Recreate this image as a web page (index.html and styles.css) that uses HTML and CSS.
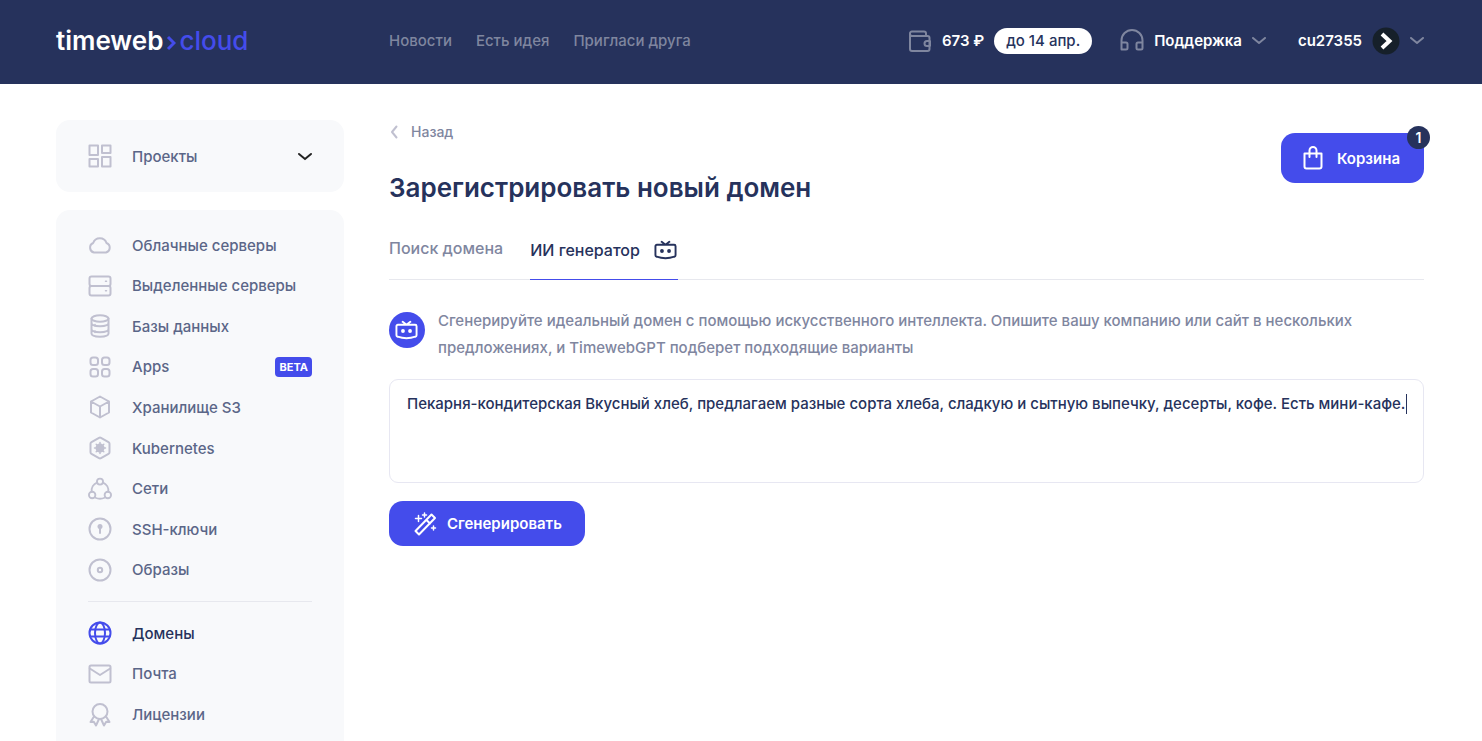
FILE: index.html
```html
<!DOCTYPE html>
<html lang="ru">
<head>
<meta charset="utf-8">
<meta name="viewport" content="width=device-width, initial-scale=1">
<title>Зарегистрировать новый домен</title>
<link rel="stylesheet" href="styles.css">
</head>
<body>
<header class="topbar">
  <a class="logo" href="#"><span class="logo-main">timeweb</span><svg class="logo-arrow" viewBox="0 0 10 16" width="10" height="16"><path d="M2 2l6 6-6 6"/></svg><span class="logo-accent">cloud</span></a>
  <nav class="topnav">
    <a href="#">Новости</a>
    <a href="#">Есть идея</a>
    <a href="#">Пригласи друга</a>
  </nav>
  <div class="account">
    <a class="balance" href="#">
      <svg class="icon" viewBox="0 0 24 24" width="24" height="24"><path d="M18 7V4.500a2 2 0 0 0-2-2H4a2 2 0 0 0-2 2.250A2.250 2.250 0 0 0 4 7h15.500a2 2 0 0 1 2 2v11a2 2 0 0 1-2 2H4a2 2 0 0 1-2-2V4.500M22 12h-3a2.500 2.500 0 0 0 0 5h3z"/></svg>
      <span>673 ₽</span>
      <span class="due">до 14 апр.</span>
    </a>
    <button class="menu support" type="button">
      <svg class="icon" viewBox="0 0 24 24" width="24" height="24"><path d="M1.500 20V11.500a10.500 10.500 0 0 1 21 0V19a1.500 1.500 0 0 1-1.500 1.500h-3A1.500 1.500 0 0 1 16.500 19v-4a1.500 1.500 0 0 1 1.500-1.500h4.500M1.500 13.500H6A1.500 1.500 0 0 1 7.500 15v4A1.500 1.500 0 0 1 6 20.500H1.500"/></svg>
      <span>Поддержка</span>
      <svg class="icon" viewBox="0 0 14 8" width="14" height="8"><path d="M1 1l6 5 6-5"/></svg>
    </button>
    <button class="menu" type="button">
      <span>cu27355</span>
      <svg class="avatar" viewBox="0 0 28 28" width="28" height="28"><circle cx="14" cy="14" r="13.500"/><path d="M10 7l7.500 7-7.500 7"/></svg>
      <svg class="icon" viewBox="0 0 14 8" width="14" height="8"><path d="M1 1l6 5 6-5"/></svg>
    </button>
  </div>
</header>

<div class="page">
  <aside class="sidebar">
    <button class="projects" type="button">
      <svg class="icon" viewBox="0 0 24 24" width="24" height="24"><path d="M1.500 1.500h8.500v9.500h-8.500zM14 1.500h8.500v7.500h-8.500zM1.500 15h8.500v7.500h-8.500zM14 13h8.500v9.500h-8.500z"/></svg>
      <span>Проекты</span>
      <svg class="chevron" viewBox="0 0 16 10" width="16" height="10"><path d="M2 3l6 5 6-5"/></svg>
    </button>
    <nav class="menu-card">
      <div class="group group-main">
        <a href="#"><svg class="icon" viewBox="0 0 24 24" width="24" height="24"><path d="M6 19.500a5 5 0 0 1-.8-9.500 7 7 0 0 1 13.300 0A5 5 0 0 1 18 19.500z"/></svg><span>Облачные серверы</span></a>
        <a href="#"><svg class="icon" viewBox="0 0 24 24" width="24" height="24"><rect x="1.500" y="2.500" width="21" height="9.500" rx="2"/><rect x="1.500" y="12" width="21" height="9.500" rx="2"/><path class="thin" d="M17.500 7.200h1M17.500 16.700h1"/></svg><span>Выделенные серверы</span></a>
        <a href="#"><svg class="icon" viewBox="0 0 24 24" width="24" height="24"><ellipse cx="12" cy="4.500" rx="8.500" ry="3.200"/><path d="M3.500 4.500v15c0 4.200 17 4.200 17 0v-15M3.500 9c0 4.200 17 4.200 17 0M3.500 15c0 4.200 17 4.200 17 0"/><path class="thin" d="M7 10.500v1.400M7 17v1.400"/></svg><span>Базы данных</span></a>
        <a href="#"><svg class="icon" viewBox="0 0 24 24" width="24" height="24"><rect x="2.500" y="2.500" width="7.500" height="7.500" rx="2.500"/><rect x="14" y="2.500" width="7.500" height="7.500" rx="2.500"/><rect x="2.500" y="14" width="7.500" height="7.500" rx="2.500"/><rect x="14" y="14" width="7.500" height="7.500" rx="2.500"/></svg><span>Apps</span><span class="tag">BETA</span></a>
        <a href="#"><svg class="icon" viewBox="0 0 24 24" width="24" height="24"><path d="M12 1.500l9 5v11l-9 5-9-5v-11zM3 6.500l9 5 9-5M12 11.500v11"/></svg><span>Хранилище S3</span></a>
        <a href="#"><svg class="icon" viewBox="0 0 24 24" width="24" height="24"><path d="M11 1.800a2 2 0 0 1 2 0l7.500 4.300a2 2 0 0 1 1 1.700v8.400a2 2 0 0 1-1 1.700L13 22.200a2 2 0 0 1-2 0l-7.500-4.300a2 2 0 0 1-1-1.700V7.800a2 2 0 0 1 1-1.700z"/><circle class="dot" cx="12" cy="12" r="4.500"/><path class="thin" d="M12 6.500v11M6.500 12h11M8.200 8.200l7.600 7.600M15.800 8.200l-7.600 7.600"/></svg><span>Kubernetes</span></a>
        <a href="#"><svg class="icon" viewBox="0 0 26 24" width="26" height="24"><circle cx="13" cy="4" r="3.300"/><circle cx="4.500" cy="18.500" r="3.500"/><circle cx="21.500" cy="18.500" r="3.500"/><path d="M9.700 5A9.500 9.500 0 0 0 4 15M16.300 5A9.500 9.500 0 0 1 22 15M8 21.500c3 1.300 7 1.300 10 0"/></svg><span>Сети</span></a>
        <a href="#"><svg class="icon" viewBox="0 0 24 24" width="24" height="24"><circle cx="12" cy="12" r="10.500"/><circle class="dot" cx="12" cy="9.500" r="2.500"/><path d="M12 10v6"/></svg><span>SSH-ключи</span></a>
        <a href="#"><svg class="icon" viewBox="0 0 24 24" width="24" height="24"><circle cx="12" cy="12" r="10.500"/><circle cx="12" cy="12" r="2.200"/></svg><span>Образы</span></a>
      </div>
      <div class="group group-more">
        <a class="current" href="#"><svg class="icon" viewBox="0 0 24 24" width="24" height="24"><circle cx="12" cy="12" r="10.500"/><ellipse cx="12" cy="12" rx="5" ry="10.500"/><path d="M2.500 8.500h19M2.500 15.500h19"/></svg><span>Домены</span></a>
        <a href="#"><svg class="icon" viewBox="0 0 24 24" width="24" height="24"><rect x="1.500" y="3.500" width="21" height="17" rx="1.500"/><path d="M1.800 6.500L12 13l10.200-6.500"/></svg><span>Почта</span></a>
        <a href="#"><svg class="icon" viewBox="0 0 24 24" width="24" height="24"><circle cx="12" cy="8.500" r="7.500"/><path d="M6 13.500L2.500 19l3.300-.3L8 22.500l3-6.500M18 13.500l3.500 5.500-3.300-.3L16 22.500 13 16"/></svg><span>Лицензии</span></a>
      </div>
    </nav>
  </aside>

  <main class="content">
    <div class="headline">
      <div>
        <a class="back" href="#"><svg class="icon" viewBox="0 0 10 14" width="10" height="14"><path d="M7.500 1.500L3 7l4.500 5.500"/></svg><span>Назад</span></a>
        <h1>Зарегистрировать новый домен</h1>
      </div>
      <button class="btn cart" type="button">
        <svg class="icon" viewBox="0 0 20 24" width="20" height="24"><path d="M1.500 7.500h17v13a2 2 0 0 1-2 2h-13a2 2 0 0 1-2-2zM6.500 11V4.500a3.500 3.500 0 0 1 7 0V11"/></svg>
        <span>Корзина</span>
        <span class="count">1</span>
      </button>
    </div>

    <div class="tabs" role="tablist">
      <button class="tab" type="button" role="tab" aria-selected="false">Поиск домена</button>
      <button class="tab" type="button" role="tab" aria-selected="true"><span>ИИ генератор</span><svg class="icon bot-face" viewBox="0 0 24 20" width="24" height="20"><path d="M3 4.500h18a1.500 1.500 0 0 1 1.500 1.500v9.500a1.500 1.500 0 0 1-1.200 1.500Q12 20.200 2.700 17a1.500 1.500 0 0 1-1.200-1.500V6A1.500 1.500 0 0 1 3 4.500zM8 1.500l4 3 4-3"/><circle class="eye" cx="8.300" cy="11" r="2"/><circle class="eye" cx="15.700" cy="11" r="2"/></svg></button>
    </div>

    <div class="hint">
      <span class="bot"><svg class="icon bot-face" viewBox="0 0 24 20" width="24" height="20"><path d="M3 4.500h18a1.500 1.500 0 0 1 1.500 1.500v9.500a1.500 1.500 0 0 1-1.200 1.500Q12 20.200 2.700 17a1.500 1.500 0 0 1-1.200-1.500V6A1.500 1.500 0 0 1 3 4.500zM8 1.500l4 3 4-3"/><circle class="eye" cx="8.300" cy="11" r="2"/><circle class="eye" cx="15.700" cy="11" r="2"/></svg></span>
      <label for="about">Сгенерируйте идеальный домен с помощью искусственного интеллекта. Опишите вашу компанию или сайт в нескольких предложениях, и TimewebGPT подберет подходящие варианты</label>
    </div>

    <div class="field">
      <textarea id="about">Пекарня-кондитерская Вкусный хлеб, предлагаем разные сорта хлеба, сладкую и сытную выпечку, десерты, кофе. Есть мини-кафе.</textarea>
      <span class="caret"></span>
    </div>

    <button class="btn generate" type="button">
      <svg class="icon" viewBox="0 0 24 24" width="24" height="24"><path d="M2.500 19L18.500 2.500 22 6 6 22.500zM13.500 8l3.500 3.500"/><path class="thin" d="M5.500 3.500v6M2.500 6.500h6M11.500 1v4M9.500 3h4M20.500 14v4M18.500 16h4"/></svg>
      <span>Сгенерировать</span>
    </button>
  </main>
</div>
</body>
</html>
```
FILE: styles.css
```css
* { box-sizing: border-box; }

body {
  display: flex;
  flex-direction: column;
  height: 100vh;
  margin: 0;
  overflow: hidden;
  background: #fff;
  color: #26325c;
  font-family: Inter, "Noto Sans", sans-serif;
  font-size: 15px;
}

a { color: inherit; text-decoration: none; }

button {
  padding: 0;
  border: 0;
  background: none;
  color: inherit;
  font: inherit;
  cursor: pointer;
}

svg { flex: none; }

.icon {
  fill: none;
  stroke: currentColor;
  stroke-width: 2;
  stroke-linecap: round;
  stroke-linejoin: round;
}

.icon .dot { fill: currentColor; stroke: none; }
.icon .eye { fill: currentColor; stroke: none; }
.icon .thin { stroke-width: 1.5; }

/* Header */
.topbar {
  display: flex;
  flex: none;
  align-items: center;
  height: 84px;
  padding: 0 58px 3px 56px;
  background: #26325c;
  color: #fff;
}

.logo {
  display: flex;
  align-items: center;
  width: 333px;
  font-size: 26px;
  font-weight: 500;
}

.logo-main { font-weight: 600; }

.logo-arrow {
  margin: 4px 3px 0;
  fill: none;
  stroke: #444ceb;
  stroke-width: 3;
}

.logo-accent { color: #444ceb; }

.topnav {
  display: flex;
  gap: 24px;
  color: #7f869f;
  font-weight: 500;
}

.account {
  display: flex;
  align-items: center;
  gap: 32px;
  margin-left: auto;
  font-weight: 600;
}

.account .icon { color: #7f869f; }

.balance, .menu { display: flex; align-items: center; gap: 10px; }
.balance { margin-right: -4px; }

.due {
  padding: 4px 12px;
  border-radius: 13px;
  background: #fff;
  color: #26325c;
  font-weight: 500;
  line-height: 18px;
}

.avatar circle { fill: #16202a; }
.avatar path { fill: none; stroke: #fff; stroke-width: 4; }

/* Page */
.page {
  display: flex;
  flex: 1;
  gap: 45px;
  min-height: 0;
  padding: 36px 58px 0 56px;
}

.sidebar {
  display: flex;
  flex: none;
  flex-direction: column;
  gap: 18px;
  width: 288px;
  color: #5b6688;
  font-weight: 500;
}

.projects {
  display: flex;
  flex: none;
  align-items: center;
  gap: 20px;
  height: 72px;
  padding: 0 31px 0 32px;
  border-radius: 14px;
  background: #f8f9fb;
}

.sidebar .icon { color: #c0c0d0; }

.chevron {
  margin-left: auto;
  fill: none;
  stroke: #222;
  stroke-width: 2;
  stroke-linecap: round;
}

.menu-card {
  flex: 1;
  padding: 15px 32px 0;
  border-radius: 14px 14px 0 0;
  background: #f8f9fb;
}

.group { display: grid; grid-auto-rows: 1fr; }
.group-main { min-height: 365px; margin-bottom: 11px; }
.group-more { min-height: 134px; padding-top: 11px; border-top: 1px solid #e7e8ee; }

.group a {
  display: flex;
  gap: 20px;
  align-items: center;
  white-space: nowrap;
}

.group .icon { width: 24px; overflow: visible; }
.group .current { color: #26325c; }
.group .current .icon { color: #444ceb; }

.tag {
  margin-left: auto;
  padding: 0 4px;
  border-radius: 4px;
  background: #444ceb;
  color: #fff;
  font-size: 11px;
  font-weight: 700;
  line-height: 20px;
}

/* Main column */
.content { flex: 1; min-width: 0; }

.headline {
  display: flex;
  align-items: flex-start;
  justify-content: space-between;
}

.back {
  display: inline-flex;
  align-items: center;
  gap: 12px;
  color: #7f869f;
  font-size: 14px;
  font-weight: 500;
  line-height: 24px;
}

.back .icon { color: #c0c0d0; }

h1 {
  margin: 24px 0 0;
  font-size: 26px;
  font-weight: 600;
  line-height: 40px;
}

.btn {
  display: flex;
  align-items: center;
  border-radius: 14px;
  background: #444ceb;
  color: #fff;
  font-weight: 600;
}

.cart {
  position: relative;
  gap: 14px;
  height: 50px;
  margin-top: 13px;
  padding: 0 24px 0 22px;
}

.count {
  position: absolute;
  top: -7px;
  right: -6px;
  width: 23px;
  border-radius: 50%;
  background: #26325c;
  font-size: 14px;
  line-height: 23px;
  text-align: center;
}

.tabs {
  display: flex;
  gap: 27px;
  margin-top: 20px;
  border-bottom: 1px solid #e7e8ee;
}

.tab {
  display: flex;
  align-items: center;
  gap: 14px;
  height: 52px;
  margin-bottom: -1px;
  color: #7f869f;
  font-size: 16px;
  font-weight: 500;
}

.tab[aria-selected="false"] { padding-bottom: 12px; }

.tab[aria-selected="true"] {
  padding-bottom: 7px;
  border-bottom: 1px solid #444ceb;
  color: #26325c;
}

.hint {
  display: flex;
  align-items: center;
  gap: 13px;
  margin-top: 27px;
  color: #7f869f;
  line-height: 27px;
}

.hint label { font-weight: 500; }

.bot {
  display: grid;
  flex: none;
  place-items: center;
  width: 36px;
  height: 36px;
  margin-bottom: 8px;
  border-radius: 50%;
  background: #444ceb;
  color: #fff;
}

.bot-face { padding-right: 1px; }

.field { position: relative; margin-top: 18px; }

textarea {
  display: block;
  width: 100%;
  height: 104px;
  padding: 12px 17px;
  border: 1px solid #e7e7f2;
  border-radius: 9px;
  outline: 0;
  background: #fff;
  color: #26325c;
  font: inherit;
  font-weight: 500;
  line-height: 24px;
  resize: none;
}

.caret {
  position: absolute;
  top: 15px;
  right: 17px;
  width: 1px;
  height: 20px;
  background: #26325c;
}

.generate {
  gap: 10px;
  height: 45px;
  margin-top: 18px;
  padding: 0 23px 0 24px;
}
```
